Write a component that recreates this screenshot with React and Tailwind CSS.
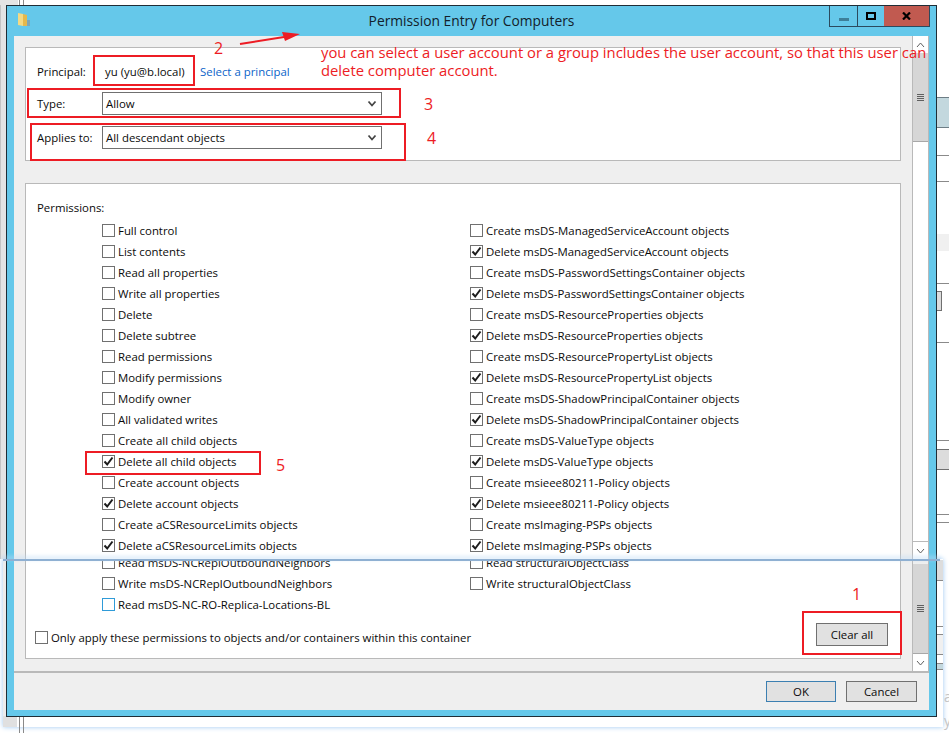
const LEFT_ROWS = [
  ['Full control', false],
  ['List contents', false],
  ['Read all properties', false],
  ['Write all properties', false],
  ['Delete', false],
  ['Delete subtree', false],
  ['Read permissions', false],
  ['Modify permissions', false],
  ['Modify owner', false],
  ['All validated writes', false],
  ['Create all child objects', false],
  ['Delete all child objects', true],
  ['Create account objects', false],
  ['Delete account objects', true],
  ['Create aCSResourceLimits objects', false],
  ['Delete aCSResourceLimits objects', true],
]

const RIGHT_ROWS = [
  ['Create msDS-ManagedServiceAccount objects', false],
  ['Delete msDS-ManagedServiceAccount objects', true],
  ['Create msDS-PasswordSettingsContainer objects', false],
  ['Delete msDS-PasswordSettingsContainer objects', true],
  ['Create msDS-ResourceProperties objects', false],
  ['Delete msDS-ResourceProperties objects', true],
  ['Create msDS-ResourcePropertyList objects', false],
  ['Delete msDS-ResourcePropertyList objects', true],
  ['Create msDS-ShadowPrincipalContainer objects', false],
  ['Delete msDS-ShadowPrincipalContainer objects', true],
  ['Create msDS-ValueType objects', false],
  ['Delete msDS-ValueType objects', true],
  ['Create msieee80211-Policy objects', false],
  ['Delete msieee80211-Policy objects', true],
  ['Create msImaging-PSPs objects', false],
  ['Delete msImaging-PSPs objects', true],
]

function Check({ label, checked, blue }) {
  return (
    <div className="h-[21px] flex items-center gap-[3px] whitespace-nowrap">
      <span className={`w-[13px] h-[13px] border bg-white flex items-center justify-center ${blue ? 'border-[#2f9bd8]' : 'border-[#707070]'}`}>
        {checked && (
          <svg width="11" height="11" viewBox="0 0 11 11">
            <path d="M1.5 5.5 L4.2 8.5 L9.5 1.5" fill="none" stroke="#1c1c1c" strokeWidth="2" />
          </svg>
        )}
      </span>
      <span>{label}</span>
    </div>
  )
}

function Combo({ value }) {
  return (
    <div className="w-[280px] h-[23px] border border-[#707070] bg-white flex items-center justify-between pl-[3px] pr-[4px]">
      <span>{value}</span>
      <svg width="10" height="8" viewBox="0 0 10 8">
        <path d="M1.5 1.5 L5 5.5 L8.5 1.5" fill="none" stroke="#444" strokeWidth="1.8" />
      </svg>
    </div>
  )
}

function Btn({ label, w, h, focus }) {
  return (
    <div className={`border bg-[#e1e1e1] flex items-center justify-center ${w} ${h} ${focus ? 'border-[#3c7fb1]' : 'border-[#707070]'}`}>
      {label}
    </div>
  )
}

function Chevron({ up }) {
  return (
    <div className="h-[17px] bg-white flex items-center justify-center">
      <svg width="9" height="6" viewBox="0 0 9 6">
        <path d={up ? 'M1 5 L4.5 1 L8 5' : 'M1 1 L4.5 5 L8 1'} fill="none" stroke="#606060" strokeWidth="1" />
      </svg>
    </div>
  )
}

function Thumb({ className }) {
  return (
    <div className={`bg-[#d6d6d6] border-b border-[#a8a8a8] flex flex-col items-center justify-center gap-[1px] ${className}`}>
      <span className="w-[7px] h-[1px] bg-[#606060]" />
      <span className="w-[7px] h-[1px] bg-[#606060]" />
      <span className="w-[7px] h-[1px] bg-[#606060]" />
      <span className="w-[7px] h-[1px] bg-[#606060]" />
    </div>
  )
}

function Backdrop() {
  return (
    <>
      {/* what shows behind the dialog in the first capture */}
      <div className="absolute left-0 top-0 w-[6px] h-[559px] bg-[#e4e4e4] border-l border-[#c4c4c4]" />
      <div className="absolute left-0 top-0 w-[18px] h-[5px] bg-[#e4e4e4]" />
      <div className="absolute left-[19px] top-0 w-[5px] h-[5px] border-x border-[#8a8a8a]" />
      <div className="absolute left-[937px] top-[97px] w-[12px] h-[31px] bg-[#c3d8de] border-y border-[#6d7d85]" />
      <div className="absolute left-[937px] top-[155px] w-[12px] h-[1px] bg-[#8a8a8a]" />
      <div className="absolute left-[937px] top-[181px] w-[12px] h-[1px] bg-[#8a8a8a]" />
      <div className="absolute left-[937px] top-[234px] w-[12px] h-[17px] bg-[#f0f0f0]" />
      <div className="absolute left-[937px] top-[283px] w-[12px] h-[1px] bg-[#8a8a8a]" />
      <div className="absolute left-[937px] top-[291px] w-[5px] h-[20px] bg-[#dcdcdc] border border-l-0 border-[#707070]" />
      <div className="absolute left-[937px] top-[342px] w-[12px] h-[1px] bg-[#8a8a8a]" />
      <div className="absolute left-[937px] top-[440px] w-[12px] h-[1px] bg-[#8a8a8a]" />
      <div className="absolute left-[937px] top-[449px] w-[12px] h-[21px] bg-[#dcdcdc] border-y border-[#707070]" />
      <div className="absolute left-[937px] top-[514px] w-[12px] h-[1px] bg-[#8a8a8a]" />
      <div className="absolute left-[937px] top-[522px] w-[12px] h-[1px] bg-[#8a8a8a]" />

      {/* the second capture, pasted over the first */}
      <div className="absolute left-[3px] top-[559px] w-[940px] h-[168px] bg-white shadow-[0_0_5px_#9cc8f0]" />
      <div className="absolute left-[3px] top-[560px] w-[3px] h-[156px] bg-[#ececec]" />
      <div className="absolute left-[3px] top-[716px] w-[14px] h-[11px] bg-[#e0e0e0]" />
      <div className="absolute left-[19px] top-[716px] w-[5px] h-[17px] border-x border-[#8a8a8a]" />
      <div className="absolute left-[937px] top-[560px] w-[6px] h-[21px] bg-[#dddddd] border-b border-[#8a8a8a]" />
      <div className="absolute left-[937px] top-[626px] w-[6px] h-[1px] bg-[#8a8a8a]" />
      <div className="absolute left-[937px] top-[634px] w-[6px] h-[21px] bg-[#f0f0f0] border-y border-[#8a8a8a]" />
      <div className="absolute left-[937px] top-[663px] w-[6px] h-[7px] bg-[#c3d8de] border-y border-[#8a8a8a]" />
      <div className="absolute left-[944px] top-[690px] text-[14px] text-[#c4c4c4]">a</div>
      <div className="absolute left-[944px] top-[714px] text-[14px] text-[#c4c4c4]">y</div>
    </>
  )
}

export default function App() {
  return (
    <div className="relative w-[949px] h-[733px] overflow-hidden bg-white pl-[6px] pt-[5px] text-[11.4px] leading-none text-[#0a0a0a] font-['Open_Sans','Liberation_Sans',sans-serif]">
      <Backdrop />

      <div className="relative w-[931px] h-[712px] border border-[#1f2d36] bg-[#65c8ea] pt-[30px] px-[7px] pb-[6px]">
        {/* title bar */}
        <div className="absolute left-[10px] top-[6px]">
          <svg width="14" height="16" viewBox="0 0 14 16">
            <path d="M1 1 L6 2 L6 14 L1 13 Z" fill="#f4d983" />
            <path d="M6 2 L10 3 L10 14 L6 14 Z" fill="#e5b84c" />
            <path d="M10 8 L13 8 L13 14 L10 14 Z" fill="#7fa6b5" />
          </svg>
        </div>
        <div className="absolute inset-x-0 top-0 h-[30px] flex items-center justify-center text-[13.8px] text-[#13212b]">
          Permission Entry for Computers
        </div>
        <div className="absolute right-[6px] top-0 h-[21px] flex border border-t-0 border-[#2b4a5e]">
          <div className="w-[28px] border-r border-[#2b4a5e] flex items-center justify-center">
            <span className="w-[10px] h-[3px] mt-[6px] bg-[#3d7f99]" />
          </div>
          <div className="w-[26px] flex items-center justify-center">
            <span className="w-[10px] h-[8px] -mt-[1px] border-2 border-black" />
          </div>
          <div className="w-[45px] bg-[#c15a50] flex items-center justify-center">
            <svg width="9" height="8" viewBox="0 0 9 8">
              <path d="M1 0.5 L8 7.5 M8 0.5 L1 7.5" stroke="#000" strokeWidth="2.2" />
            </svg>
          </div>
        </div>

        {/* client */}
        <div className="h-full bg-[#efefef] flex flex-col">
          <div className="flex-1 flex pl-[11px]">
            <div className="flex-1 pr-[11px]">
              <div className="h-[114px] mt-[11px] border border-[#b9b9b9] bg-white pl-[11px]">
                <div className="h-[38px] pt-[10px] flex items-center">
                  <span className="w-[68px]">Principal:</span>
                  <span className="w-[95px]">yu (yu@b.local)</span>
                  <span className="text-[#0a63c9]">Select a principal</span>
                </div>
                <div className="h-[23px] mt-[6px] flex items-center">
                  <span className="w-[65px]">Type:</span>
                  <Combo value="Allow" />
                </div>
                <div className="h-[23px] mt-[11px] flex items-center">
                  <span className="w-[65px]">Applies to:</span>
                  <Combo value="All descendant objects" />
                </div>
              </div>

              <div className="h-[476px] mt-[22px] border border-[#b9b9b9] bg-white pl-[11px]">
                <div className="h-[36px] pt-[12px] flex items-center">Permissions:</div>
                <div className="h-[336px] pl-[65px] grid grid-cols-[368px_1fr]">
                  <div>{LEFT_ROWS.map(r => <Check key={r[0]} label={r[0]} checked={r[1]} />)}</div>
                  <div>{RIGHT_ROWS.map(r => <Check key={r[0]} label={r[0]} checked={r[1]} />)}</div>
                </div>
                <div className="h-[56px] mt-[4px] overflow-hidden pl-[65px] grid grid-cols-[368px_1fr]">
                  <div className="-mt-[8px]">
                    <Check label="Read msDS-NCReplOutboundNeighbors" />
                    <Check label="Write msDS-NCReplOutboundNeighbors" />
                    <Check label="Read msDS-NC-RO-Replica-Locations-BL" blue />
                  </div>
                  <div className="-mt-[8px]">
                    <Check label="Read structuralObjectClass" />
                    <Check label="Write structuralObjectClass" />
                  </div>
                </div>
                <div className="mt-[7px] -ml-[2px] pr-[12px] flex items-start justify-between">
                  <div className="mt-[4px]">
                    <Check label="Only apply these permissions to objects and/or containers within this container" />
                  </div>
                  <Btn label="Clear all" w="w-[72px]" h="h-[23px]" />
                </div>
              </div>
            </div>

            {/* scroll bars of the two captures */}
            <div className="w-[17px] border-x border-[#b9b9b9] flex flex-col">
              <div className="h-[523px] bg-white flex flex-col">
                <Chevron up />
                <Thumb className="h-[89px]" />
                <div className="flex-1" />
                <div className="border-t border-[#b9b9b9]"><Chevron /></div>
              </div>
              <div className="flex-1 pt-[5px] flex flex-col">
                <Thumb className="flex-1" />
                <Chevron />
              </div>
            </div>
          </div>

          <div className="h-[39px] border-t-2 border-[#b9b9b9] flex items-center justify-end gap-[10px] pr-[12px]">
            <Btn label="OK" w="w-[70px]" h="h-[21px]" focus />
            <Btn label="Cancel" w="w-[71px]" h="h-[21px]" />
          </div>
        </div>
      </div>

      {/* seam between the two captures */}
      <div className="absolute left-[3px] top-[559px] w-[937px] h-[2px] bg-[#8fb0d2] shadow-[0_-2px_4px_#bfdcf5]" />

      {/* red annotations */}
      <div className="absolute left-[93px] top-[55px] w-[102px] h-[31px] border-2 border-[#ed1c24]" />
      <div className="absolute left-[27px] top-[88px] w-[374px] h-[30px] border-2 border-[#ed1c24]" />
      <div className="absolute left-[30px] top-[123px] w-[376px] h-[38px] border-2 border-[#ed1c24]" />
      <div className="absolute left-[85px] top-[451px] w-[176px] h-[24px] border-2 border-[#ed1c24]" />
      <div className="absolute left-[802px] top-[611px] w-[100px] h-[44px] border-2 border-[#ed1c24]" />
      <svg className="absolute left-[238px] top-[30px]" width="66" height="16" viewBox="0 0 66 16">
        <path d="M2 14 L46 7" stroke="#ed1c24" strokeWidth="2" />
        <path d="M62 4 L44 2 L47 11 Z" fill="#ed1c24" />
      </svg>
      <div className="absolute left-[214px] top-[40px] text-[16px] text-[#ed1c24]">2</div>
      <div className="absolute left-[424px] top-[96px] text-[16px] text-[#ed1c24]">3</div>
      <div className="absolute left-[427px] top-[130px] text-[16px] text-[#ed1c24]">4</div>
      <div className="absolute left-[276px] top-[457px] text-[16px] text-[#ed1c24]">5</div>
      <div className="absolute left-[852px] top-[586px] text-[16px] text-[#ed1c24]">1</div>
      <div className="absolute left-[321px] top-[43px] w-[612px] text-[14.8px] leading-[18px] text-[#ed1c24]">
        you can select a user account or a group includes the user account, so that this user can delete computer account.
      </div>
    </div>
  )
}
